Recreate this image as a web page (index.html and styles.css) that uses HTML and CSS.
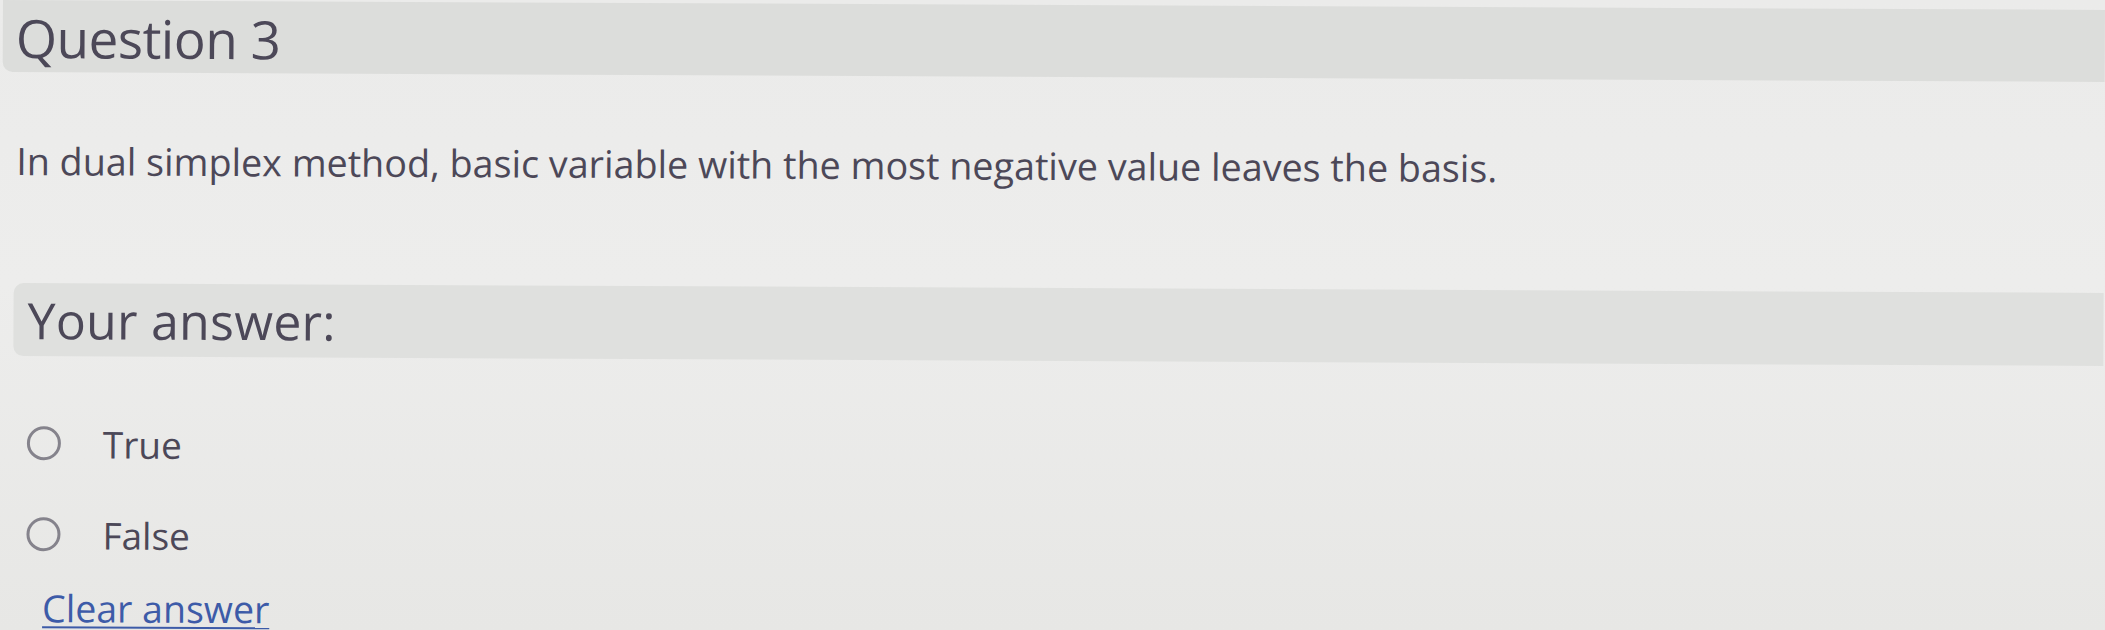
FILE: index.html
```html
<!DOCTYPE html>
<html lang="en">
<head>
<meta charset="utf-8">
<title>Question 3</title>
<link rel="stylesheet" href="styles.css">
</head>
<body>
<main class="sheet">
  <header class="q-head"><h1 class="q-title">Question 3</h1></header>
  <p class="q-text">In dual simplex method, basic variable with the most negative value leaves the basis.</p>
  <div class="answer-head"><h2 class="answer-title">Your answer:</h2></div>
  <ul class="choices">
    <li class="choice"><span class="radio"></span><span class="choice-label">True</span></li>
    <li class="choice"><span class="radio"></span><span class="choice-label">False</span></li>
  </ul>
  <a class="clear" href="#">Clear answer</a>
</main>
</body>
</html>
```

FILE: styles.css
```css
html, body {
  margin: 0;
  height: 100%;
  overflow: hidden;
}

body {
  background: linear-gradient(180deg, #ebebea 0%, #ededec 45%, #e7e7e5 100%);
  font-family: "Open Sans", "Noto Sans", sans-serif;
  color: #4c4858;
}

.sheet {
  transform: rotate(0.27deg);
  transform-origin: 0 0;
  display: flex;
  flex-direction: column;
  align-items: flex-start;
}

.q-head {
  align-self: stretch;
  margin-left: 3px;
  height: 72px;
  background: #dcdddb;
  border-radius: 0 0 0 10px;
  display: flex;
  align-items: center;
  padding-left: 13px;
}

.q-title {
  margin: 0;
  font-weight: 400;
  font-size: 53px;
  line-height: 1;
  letter-spacing: -0.5px;
  transform: translateY(1px);
}

.q-text {
  margin: 66px 0 0 17px;
  font-size: 37.7px;
  line-height: 1.2;
}

.answer-head {
  align-self: stretch;
  margin: 100px 0 0 15px;
  height: 73px;
  background: #dfe0de;
  border-radius: 10px 0 0 10px;
  display: flex;
  align-items: center;
  padding-left: 14px;
}

.answer-title {
  margin: 0;
  font-weight: 400;
  font-size: 50px;
  line-height: 1;
  letter-spacing: 0.3px;
}

.choices {
  list-style: none;
  margin: 64px 0 0 0;
  padding: 0 0 0 29px;
  display: flex;
  flex-direction: column;
  gap: 45px;
}

.choice {
  display: flex;
  align-items: center;
  gap: 42px;
  height: 46px;
}

.radio {
  width: 34px;
  height: 34px;
  border: 3px solid #85838c;
  border-radius: 50%;
  box-sizing: border-box;
}

.choice-label {
  font-size: 37px;
  line-height: 1;
}

.clear {
  margin: 28px 0 0 45px;
  font-size: 37.5px;
  line-height: 1.2;
  color: #3d5ba8;
  text-decoration: underline;
  text-decoration-thickness: 2px;
  text-underline-offset: 4px;
}
```
